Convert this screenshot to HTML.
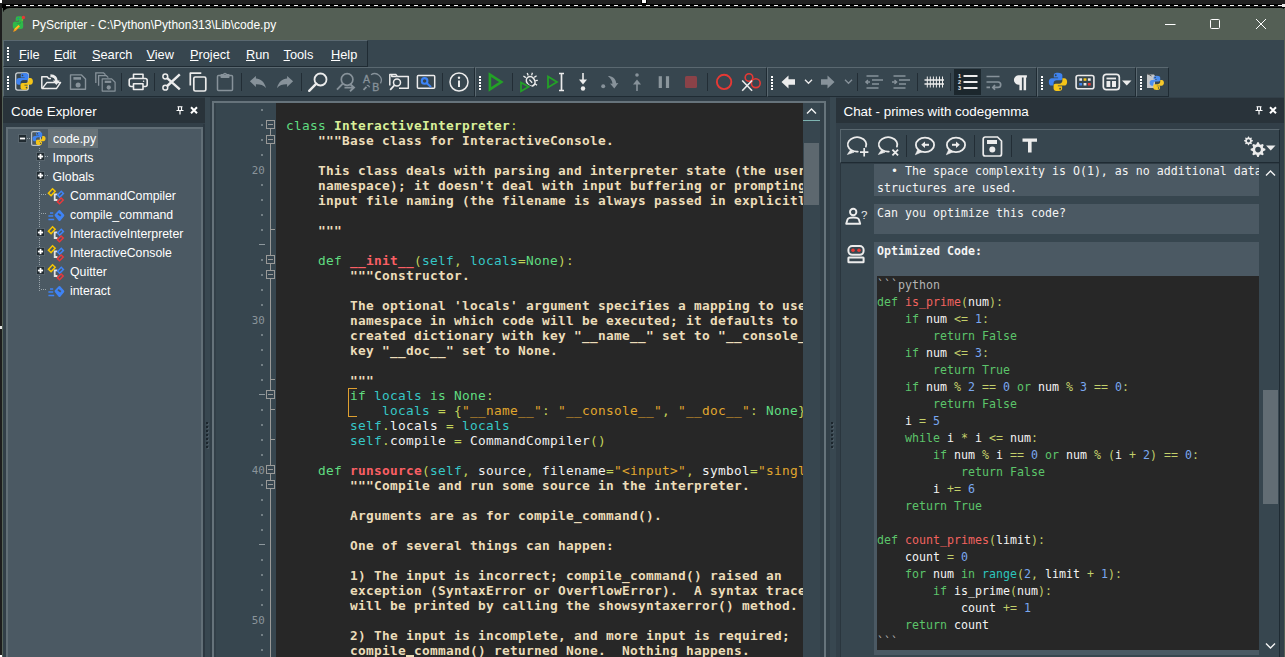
<!DOCTYPE html>
<html lang="en"><head><meta charset="utf-8"><title>PyScripter - C:\Python\Python313\Lib\code.py</title>
<style>
html,body{margin:0;padding:0}
body{width:1285px;height:657px;overflow:hidden;position:relative;background:#37464f;font-family:"Liberation Sans",sans-serif;color:#fff}
.a{position:absolute}
svg{position:absolute;overflow:visible}
.tb{position:absolute;box-sizing:border-box;border-top:1px solid #5a6870;border-left:1px solid #5a6870;border-right:1px solid #1f2b33;border-bottom:1px solid #1f2b33}
.grip{position:absolute;width:2px;height:14px;background:repeating-linear-gradient(180deg,#fff 0 2px,transparent 2px 3px)}
.sep{position:absolute;width:1px;height:18px;background:#222d35}
.menu{position:absolute;top:46.7px;font-size:12.75px;line-height:16px;color:#fff;white-space:pre}
.menu u{text-decoration:underline;text-underline-offset:1.200px;text-decoration-thickness:1px}
.hdr{position:absolute;font-size:13.400px;line-height:16px;color:#fff;white-space:pre}
.tree{position:absolute;font-size:12.300px;line-height:19px;height:19px;margin-top:1px;color:#fff;white-space:pre}
.code{position:absolute;font-family:"DejaVu Sans Mono","Liberation Mono",monospace;font-size:12.8px;line-height:15px;height:15px;white-space:pre;color:#f2f2f2;letter-spacing:0.294px}
.gn{position:absolute;font-family:"DejaVu Sans Mono","Liberation Mono",monospace;font-size:10.8px;line-height:15px;height:15px;white-space:pre;color:#8a949a;text-align:right;width:40px;left:224.7px}
.code b{font-weight:bold}
.k{color:#60dc80}.c{color:#d9f09a;font-weight:bold}.d{color:#ecddba;font-weight:bold}.f{color:#fa5f64;font-weight:bold}.s{color:#36c6c6}.p{color:#c3d45a}.q{color:#e0a62e}.w{color:#f2f2f2}
.chat{position:absolute;font-family:"DejaVu Sans Mono","Liberation Mono",monospace;font-size:11.6px;line-height:17px;height:17px;white-space:pre;color:#f4f4f4;left:877px;letter-spacing:0.016px}
.ck{color:#5cc46a}.cf{color:#f2635f}.cn{color:#7aa7f0}.co{color:#c3cf6a}.cb{color:#2cc5bd}.cg{color:#b4b4b4}
</style></head><body>
<div class="a" style="left:0px;top:0px;width:1285px;height:8px;background:#1f1f1f;"></div>
<div class="a" style="left:0px;top:4px;width:1285px;height:4px;background:#000;"></div>
<div class="a" style="left:2px;top:4px;width:12px;height:12px;background:#000;"></div>
<div class="a" style="left:1276px;top:4px;width:9px;height:9px;background:#000;"></div>
<div class="a" style="left:6px;top:5px;width:1279px;height:1px;background:repeating-linear-gradient(90deg,#f4f4f4 0 4px,transparent 4px 8px);box-shadow:0 0.5px 0 rgba(255,255,255,.25)"></div>
<div class="a" style="left:0px;top:0px;width:2px;height:657px;background:#1d1d1d;"></div>
<div class="a" style="left:2px;top:8px;width:1px;height:649px;background:#566359;"></div>
<div class="a" style="left:1284px;top:8px;width:1px;height:649px;background:#545f55;"></div>
<div class="a" style="left:0px;top:0px;width:2px;height:3px;background:#fff;"></div>
<div class="a" style="left:642px;top:0px;width:4px;height:3px;background:#fff;outline:1px solid #000"></div>
<div class="a" style="left:1282px;top:4px;width:3px;height:3px;background:#e8e8e8;"></div>
<div class="a" style="left:0px;top:326px;width:2px;height:3px;background:#e8e8e8;"></div>
<div class="a" style="left:0px;top:655px;width:2px;height:2px;background:#fff;"></div>
<div class="a" style="left:2px;top:7.600px;width:1283px;height:32.400px;background:#545f55;border-top-left-radius:8px;border-top-right-radius:4px"></div>
<svg style="left:12px;top:15px" width="15" height="18" viewBox="0 0 15 18"><rect x="3.700" y="1.200" width="7.500" height="6.800" rx="2.300" fill="#2fb84a"/><rect x=".8" y="6.400" width="10.400" height="7.500" rx="2.500" fill="#2fb84a"/><path d="M3.700 6.400h3v-1.200" stroke="#545f55" stroke-width=".8" fill="none"/><path d="M8.300 6.900v1.500h-3.500" stroke="#259a3d" stroke-width=".7" fill="none"/><circle cx="11.400" cy="2.500" r="1.700" fill="#e53935"/><path d="M10.900 4.300L10.300 6L9.500 5Z" fill="#f39c12"/><circle cx="6.300" cy="3.600" r=".75" fill="#1f86a8"/><path d="M1.200 17L2.100 13.900L6.300 9.900L8.100 11.500L3.900 15.700Z" fill="#f59b1a"/><path d="M2.900 13.800L6.600 10.300L7.300 10.900L3.500 14.500Z" fill="#ffd028"/></svg>
<div class="a" style="left:32px;top:16.8px;font-size:12px;line-height:16px;white-space:pre;color:#fff">PyScripter - C:\Python\Python313\Lib\code.py</div>
<svg style="left:1160px;top:14px" width="120" height="20" viewBox="0 0 120 20"><g stroke="#fff" stroke-width="1" fill="none"><path d="M5 10.5h10.5"/><rect x="50.5" y="5.5" width="9" height="9" rx="1"/><path d="M96 5l10 10M106 5l-10 10"/></g></svg>
<div class="tb" style="left:3px;top:40px;width:365px;height:27px;border-left-color:#5a6870"></div>
<div class="grip" style="left:7px;top:47px"></div>
<div class="menu" style="left:19px"><u>F</u>ile</div>
<div class="menu" style="left:54px"><u>E</u>dit</div>
<div class="menu" style="left:92px"><u>S</u>earch</div>
<div class="menu" style="left:146.5px"><u>V</u>iew</div>
<div class="menu" style="left:190px"><u>P</u>roject</div>
<div class="menu" style="left:246px"><u>R</u>un</div>
<div class="menu" style="left:283.5px"><u>T</u>ools</div>
<div class="menu" style="left:331px"><u>H</u>elp</div>
<div class="tb" style="left:3px;top:67px;width:472px;height:30px"></div>
<div class="tb" style="left:475px;top:67px;width:292px;height:30px"></div>
<div class="tb" style="left:767px;top:67px;width:270px;height:30px"></div>
<div class="tb" style="left:1037px;top:67px;width:99px;height:30px"></div>
<div class="tb" style="left:1136px;top:67px;width:33px;height:30px"></div>
<div class="grip" style="left:7px;top:76px"></div>
<div class="grip" style="left:479px;top:76px"></div>
<div class="grip" style="left:771px;top:76px"></div>
<div class="grip" style="left:1041px;top:76px"></div>
<div class="grip" style="left:1140px;top:76px"></div>
<div class="sep" style="left:121px;top:73px"></div>
<div class="sep" style="left:154px;top:73px"></div>
<div class="sep" style="left:241px;top:73px"></div>
<div class="sep" style="left:301px;top:73px"></div>
<div class="sep" style="left:442px;top:73px"></div>
<div class="sep" style="left:512px;top:73px"></div>
<div class="sep" style="left:707px;top:73px"></div>
<div class="sep" style="left:857px;top:73px"></div>
<div class="sep" style="left:917px;top:73px"></div>
<div class="sep" style="left:950px;top:73px"></div>
<div class="a" style="left:954px;top:69px;width:27px;height:26px;background:#1c272d;"></div>
<svg style="left:14.0px;top:72px" width="20" height="20" viewBox="0 0 20 20"><rect x="1.700" y=".9" width="12.600" height="17.200" rx="2" fill="none" stroke="#cfd3d6" stroke-width="1.300"/><g transform="translate(1.64 0.54) scale(1.113)"><path d="M7.9.5C5 .5 4.6 1.7 4.6 2.6V4.4H8.1V5H3C1.5 5 .5 6.2.5 8S1.3 11 2.8 11H4.4V9C4.4 7.6 5.5 6.6 6.8 6.6H10C11 6.6 11.6 5.9 11.6 4.9V2.6C11.6 1.3 10.5.5 7.9.5Z" fill="#3f83f0"/><circle cx="6.2" cy="2.5" r=".75" fill="#36454f"/><g transform="rotate(180 8 8)"><path d="M7.9.5C5 .5 4.6 1.7 4.6 2.6V4.4H8.1V5H3C1.5 5 .5 6.2.5 8S1.3 11 2.8 11H4.4V9C4.4 7.6 5.5 6.6 6.8 6.6H10C11 6.6 11.6 5.9 11.6 4.9V2.6C11.6 1.3 10.5.5 7.9.5Z" fill="#f5c518"/><circle cx="6.2" cy="2.5" r=".75" fill="#36454f"/></g></g></svg>
<svg style="left:41.0px;top:72px" width="20" height="20" viewBox="0 0 20 20"><g fill="none" stroke="#ececec" stroke-width="1.500" stroke-linejoin="round"><path d="M.8 16.200V4.800h5.300l1.600 1.800h2.300"/><path d="M1 16.600L5.800 10.600H19.500L15.400 16.600z"/></g><path d="M9.400 3.600C13.200 3.800 15.400 6 15.500 9.400" fill="none" stroke="#ececec" stroke-width="2.600"/><path d="M11.800 8.600h7l-3.400 4.400z" fill="#ececec"/></svg>
<svg style="left:68.0px;top:72px" width="20" height="20" viewBox="0 0 20 20"><g transform="translate(1.8 2.2) scale(1.0)"><path d="M.7 .7h11l4 4v10.300h-15z" fill="none" stroke="#87929a" stroke-width="1.400" stroke-linejoin="round"/><rect x="3.600" y="2.900" width="7.600" height="2.600" fill="#87929a"/><circle cx="8.300" cy="10.800" r="2.500" fill="#87929a"/></g></svg>
<svg style="left:95.0px;top:72px" width="20" height="20" viewBox="0 0 20 20"><g fill="none" stroke="#87929a" stroke-width="1.3"><path d="M.8 11V.8h7.700l2 2"/><path d="M3.600 13.800V3.600h7.700l2 2"/></g><g transform="translate(6.6 6.2) scale(0.86)"><path d="M.7 .7h11l4 4v10.300h-15z" fill="none" stroke="#87929a" stroke-width="1.400" stroke-linejoin="round"/><rect x="3.600" y="2.900" width="7.600" height="2.600" fill="#87929a"/><circle cx="8.300" cy="10.800" r="2.500" fill="#87929a"/></g></svg>
<svg style="left:128.0px;top:72px" width="20" height="20" viewBox="0 0 20 20"><g fill="none" stroke="#ececec" stroke-width="1.600" stroke-linejoin="round"><path d="M5.500 6.500V2.300h9.500V6.500"/><rect x="1.200" y="6.500" width="18" height="8" rx="2"/><rect x="5.500" y="11.700" width="9.500" height="5.800" fill="#37464f"/></g><circle cx="15.600" cy="9.300" r=".8" fill="#ececec"/></svg>
<svg style="left:161.0px;top:72px" width="20" height="20" viewBox="0 0 20 20"><g fill="none" stroke="#ececec"><circle cx="4.300" cy="4.500" r="2.400" stroke-width="1.500"/><circle cx="4.300" cy="15.700" r="2.400" stroke-width="1.500"/><path d="M6.200 6.200L18.800 17.400M6.200 14L18.800 2.400" stroke-width="2.400"/></g></svg>
<svg style="left:188.0px;top:72px" width="20" height="20" viewBox="0 0 20 20"><g fill="none" stroke="#ececec" stroke-width="1.700" stroke-linejoin="round"><path d="M2.300 13.500V1.200h11"/><rect x="5.800" y="5" width="12" height="14" rx="1.500"/></g></svg>
<svg style="left:215.0px;top:72px" width="20" height="20" viewBox="0 0 20 20"><g fill="none" stroke="#87929a" stroke-width="1.500" stroke-linejoin="round"><rect x="2.500" y="3.500" width="15" height="15" rx="1"/></g><path d="M6.200 5.200V2.600h2.300a1.600 1.600 0 0 1 3 0h2.300v2.600z" fill="none" stroke="#87929a" stroke-width="1.400" stroke-linejoin="round"/><path d="M6.200 4.300h7.600" stroke="#87929a" stroke-width="1.800"/></svg>
<svg style="left:248.0px;top:72px" width="20" height="20" viewBox="0 0 20 20"><path d="M1.900 9.300L7.900 3.900V6.600C12.500 6.800 16.500 10 18 15.900C15.500 13 12 12.200 7.900 12.300V15.100Z" fill="#87929a"/></svg>
<svg style="left:275.0px;top:72px" width="20" height="20" viewBox="0 0 20 20"><g transform="translate(20 0) scale(-1 1)"><path d="M1.900 9.300L7.900 3.900V6.600C12.500 6.800 16.500 10 18 15.900C15.500 13 12 12.200 7.900 12.300V15.100Z" fill="#87929a"/></g></svg>
<svg style="left:308.0px;top:72px" width="20" height="20" viewBox="0 0 20 20"><g fill="none" stroke="#ececec"><circle cx="12.500" cy="7.500" r="6" stroke-width="1.800"/><path d="M8.300 11.700L1.200 18.800" stroke-width="2.400" stroke-linecap="round"/></g></svg>
<svg style="left:335.0px;top:72px" width="20" height="20" viewBox="0 0 20 20"><g fill="none" stroke="#87929a"><circle cx="12.100" cy="7.500" r="5.800" stroke-width="1.700"/><path d="M7.800 11.600L2 17.600" stroke-width="1.900"/><path d="M9.500 15.600h9.500M15 12l4 3.600l-4 3.600" stroke-width="1.900"/></g></svg>
<svg style="left:362.0px;top:72px" width="20" height="20" viewBox="0 0 20 20"><g fill="none" stroke="#87929a" stroke-width="1.300"><path d="M9 2.800a6.600 6.600 0 0 1 9.500 8.600"/><path d="M1.500 17.800l3-3" stroke-width="1.800"/><path d="M4.800 13.400c1.500 0 2.300.6 2.800 1.800"/></g><text x="1" y="10.800" font-family="Liberation Sans,sans-serif" font-size="10.500" fill="#87929a" stroke="#87929a" stroke-width=".3">A</text><text x="10.300" y="18.500" font-family="Liberation Sans,sans-serif" font-size="10.500" fill="#87929a" stroke="#87929a" stroke-width=".3">B</text></svg>
<svg style="left:389.0px;top:72px" width="20" height="20" viewBox="0 0 20 20"><g fill="none" stroke="#ececec" stroke-width="1.500" stroke-linejoin="round"><path d="M.8 13.500V2.400h6l1.500 2.100H19.300v11.700H10"/><path d="M2.800 2.400v2.100h5"/><circle cx="8" cy="10.600" r="3.500" fill="#37464f"/><path d="M5.500 13.200L1.200 17.800" stroke-width="1.700"/></g></svg>
<svg style="left:416.0px;top:72px" width="20" height="20" viewBox="0 0 20 20"><rect x="1.400" y="3.500" width="17.300" height="12.800" rx="1" fill="none" stroke="#ececec" stroke-width="1.500"/><g fill="none" stroke="#3d84f5" stroke-width="2.100"><circle cx="8.600" cy="8.900" r="2.800"/><path d="M10.800 11.200l3.700 3.300" stroke-linecap="round"/></g></svg>
<svg style="left:449.0px;top:72px" width="20" height="20" viewBox="0 0 20 20"><circle cx="10" cy="10" r="9" fill="none" stroke="#ececec" stroke-width="1.500"/><rect x="9" y="8.500" width="2" height="6.500" fill="#ececec"/><circle cx="10" cy="5.700" r="1.200" fill="#ececec"/></svg>
<svg style="left:485.5px;top:72px" width="20" height="20" viewBox="0 0 20 20"><path d="M3.900 2.600L15.300 10L3.900 17.400z" fill="none" stroke="#23a127" stroke-width="2.600" stroke-linejoin="miter"/></svg>
<svg style="left:519.0px;top:72px" width="20" height="20" viewBox="0 0 20 20"><g fill="none" stroke="#ececec" stroke-width="1.300"><ellipse cx="11.700" cy="9.300" rx="4" ry="5" transform="rotate(-32 11.700 9.300)" stroke-width="1.600"/><path d="M6.800 5.600L4.400 4M9.200 3.600L8.200 1M12.600 3.400L13.400 .8M15.200 5.400L17.600 3.800M16.400 8.600L18.800 8.400M16 11.800l2 1.400M10.400 7.600l2.800 3.200"/></g><path d="M2 10.400l7.600 4.400L2 19.200z" fill="#37464f" stroke="#37464f" stroke-width="3.400"/><path d="M2 10.400l7.600 4.400L2 19.200z" fill="none" stroke="#23a127" stroke-width="1.700"/></svg>
<svg style="left:546.0px;top:72px" width="20" height="20" viewBox="0 0 20 20"><path d="M2 4.500L11 10L2 15.500z" fill="none" stroke="#23a127" stroke-width="1.800"/><path d="M13 1.500h5M13 18.500h5M15.500 1.500v17" stroke="#ececec" stroke-width="1.700" fill="none"/></svg>
<svg style="left:573.0px;top:72px" width="20" height="20" viewBox="0 0 20 20"><path d="M10 1v10" stroke="#ececec" stroke-width="1.600"/><path d="M6 7.500h8L10 12.500z" fill="#ececec"/><circle cx="10" cy="16.500" r="2.200" fill="#ececec"/></svg>
<svg style="left:600.0px;top:72px" width="20" height="20" viewBox="0 0 20 20"><circle cx="3.200" cy="14.300" r="2" fill="#87929a"/><path d="M7.900 4.100C12.300 4.100 15.600 6.500 16.300 11.300L18.400 11L14.300 16.600L10 11.600L12.500 11.700C12.200 9 10.600 6.200 7.900 4.100Z" fill="#87929a"/></svg>
<svg style="left:627.0px;top:72px" width="20" height="20" viewBox="0 0 20 20"><circle cx="10" cy="3" r="1.800" fill="#87929a"/><path d="M10 19V10" stroke="#87929a" stroke-width="1.600"/><path d="M6 12.500h8L10 7.500z" fill="#87929a"/></svg>
<svg style="left:654.0px;top:72px" width="20" height="20" viewBox="0 0 20 20"><rect x="4.700" y="4.200" width="3.200" height="11.800" fill="#8b969c"/><rect x="11.900" y="4.200" width="3.200" height="11.800" fill="#8b969c"/></svg>
<svg style="left:681.0px;top:72px" width="20" height="20" viewBox="0 0 20 20"><rect x="4" y="4" width="12" height="12" rx="1.500" fill="#8a4248"/></svg>
<svg style="left:714.0px;top:72px" width="20" height="20" viewBox="0 0 20 20"><circle cx="10.100" cy="9.900" r="7.200" fill="none" stroke="#e53935" stroke-width="1.900"/></svg>
<svg style="left:741.0px;top:72px" width="20" height="20" viewBox="0 0 20 20"><g fill="none" stroke="#e53935" stroke-width="1.600"><circle cx="8" cy="5.500" r="3.800"/><circle cx="14.800" cy="11.200" r="4.400"/></g><path d="M1.200 8.500l9.900 10.200M11.100 8.500L1.200 18.700" stroke="#ececec" stroke-width="1.600"/></svg>
<svg style="left:778.0px;top:72px" width="20" height="20" viewBox="0 0 20 20"><path d="M1 10L8 3.500v3.800h6.500v5.400H8v3.800z" fill="#ececec" transform="translate(2.500 0)"/></svg>
<svg style="left:804px;top:78px" width="9" height="8" viewBox="0 0 9 8"><path d="M1 1.800L4.500 5.300L8 1.800" fill="none" stroke="#ececec" stroke-width="1.300"/></svg>
<svg style="left:818.0px;top:72px" width="20" height="20" viewBox="0 0 20 20"><g transform="translate(17.500 0) scale(-1 1)"><path d="M1 10L8 3.500v3.800h6.500v5.400H8v3.800z" fill="#87929a"/></g></svg>
<svg style="left:844px;top:78px" width="9" height="8" viewBox="0 0 9 8"><path d="M1 1.800L4.500 5.300L8 1.800" fill="none" stroke="#87929a" stroke-width="1.300"/></svg>
<svg style="left:864.0px;top:72px" width="20" height="20" viewBox="0 0 20 20"><g stroke="#87929a" stroke-width="1.300" fill="none"><path d="M2.500 4h12M8 8h11M2 10h4M4 8l-2.200 2l2.200 2M8 12h7M2.500 16h12"/></g></svg>
<svg style="left:891.0px;top:72px" width="20" height="20" viewBox="0 0 20 20"><g stroke="#87929a" stroke-width="1.300" fill="none"><path d="M2.500 4h12M8 8h11M1 10h4.500M3.500 8l2.200 2l-2.200 2M8 12h7M2.500 16h12"/></g></svg>
<svg style="left:924.0px;top:72px" width="20" height="20" viewBox="0 0 20 20"><g stroke="#ececec" stroke-width="1.400" fill="none"><path d="M.5 8h19.500M.5 12h19.500" stroke-width="1.700"/><path d="M3.300 4.500v11M6.300 4.500v11M9.400 4.500v11M12.400 4.500v11M15.500 4.500v11M18.500 4.500v11" stroke-width="1"/></g></svg>
<svg style="left:957.5px;top:72px" width="20" height="20" viewBox="0 0 20 20"><g stroke="#ececec" stroke-width="1.800"><path d="M5.500 4h14M5.500 10h14M5.500 16h14"/></g><g fill="#ececec" font-family="Liberation Sans,sans-serif" font-size="5.500" font-weight="bold"><text x="0" y="6">1</text><text x="0" y="12">2</text><text x="0" y="18">3</text></g></svg>
<svg style="left:984.0px;top:72px" width="20" height="20" viewBox="0 0 20 20"><g stroke="#87929a" stroke-width="1.700" fill="none"><path d="M2.500 4.500h13M2.500 10h11.500a2.700 2.700 0 0 1 0 5.400H9M11 13l-2.200 2.400l2.200 2.400M2.500 15.400h3.500"/></g></svg>
<svg style="left:1011.0px;top:72px" width="20" height="20" viewBox="0 0 20 20"><path d="M17.500 3H9.200a4.700 4.700 0 0 0 0 9.400h.8V18h2.500V5.200h1.700V18h2.500V5.200h.8z" fill="#ececec" transform="translate(-1.600 .3)"/></svg>
<svg style="left:1048.0px;top:72px" width="20" height="20" viewBox="0 0 20 20"><g transform="translate(0.2 0.2) scale(1.22)"><path d="M7.9.5C5 .5 4.6 1.7 4.6 2.6V4.4H8.1V5H3C1.5 5 .5 6.2.5 8S1.3 11 2.8 11H4.4V9C4.4 7.6 5.5 6.6 6.8 6.6H10C11 6.6 11.6 5.9 11.6 4.9V2.6C11.6 1.3 10.5.5 7.9.5Z" fill="#3f83f0"/><circle cx="6.2" cy="2.5" r=".75" fill="#36454f"/><g transform="rotate(180 8 8)"><path d="M7.9.5C5 .5 4.6 1.7 4.6 2.6V4.4H8.1V5H3C1.5 5 .5 6.2.5 8S1.3 11 2.8 11H4.4V9C4.4 7.6 5.5 6.6 6.8 6.6H10C11 6.6 11.6 5.9 11.6 4.9V2.6C11.6 1.3 10.5.5 7.9.5Z" fill="#f5c518"/><circle cx="6.2" cy="2.5" r=".75" fill="#36454f"/></g></g></svg>
<svg style="left:1075.0px;top:72px" width="20" height="20" viewBox="0 0 20 20"><rect x="1.100" y="3.500" width="17.800" height="13.200" rx="2" fill="none" stroke="#ececec" stroke-width="1.600"/><rect x="4.300" y="6.300" width="2.800" height="2.500" fill="#e8e8e8"/><rect x="8.600" y="6.300" width="2.800" height="2.500" fill="#f5c518"/><rect x="12.900" y="6.300" width="2.800" height="2.500" fill="#e8e8e8"/><rect x="4.300" y="11" width="2.800" height="2.500" fill="#3f83f0"/><rect x="8.600" y="11" width="2.800" height="2.500" fill="#e8e8e8"/><rect x="12.900" y="11" width="2.800" height="2.500" fill="#e53935"/></svg>
<svg style="left:1102.0px;top:72px" width="20" height="20" viewBox="0 0 20 20"><rect x="1.300" y="2.300" width="16" height="15.400" rx="3" fill="none" stroke="#ececec" stroke-width="1.700"/><path d="M4.500 6.500h9.500" stroke="#ececec" stroke-width="1.800"/><rect x="4.500" y="9" width="3.800" height="6" fill="#ececec"/><rect x="10" y="9" width="4" height="6" fill="#ececec"/></svg>
<svg style="left:1122px;top:80px" width="10" height="6" viewBox="0 0 10 6"><path d="M0 .5h9.500L4.750 5.500z" fill="#ececec"/></svg>
<svg style="left:1145.0px;top:72px" width="20" height="20" viewBox="0 0 20 20"><path d="M2 2.500h7l1 1.500v12H2z" fill="#dcdcdc" opacity=".85"/><path d="M2.500 1.500l4 2.500" stroke="#555" stroke-width="1"/><g transform="translate(4.2 3.2) scale(0.95)"><path d="M7.9.5C5 .5 4.6 1.7 4.6 2.6V4.4H8.1V5H3C1.5 5 .5 6.2.5 8S1.3 11 2.8 11H4.4V9C4.4 7.6 5.5 6.6 6.8 6.6H10C11 6.6 11.6 5.9 11.6 4.9V2.6C11.6 1.3 10.5.5 7.9.5Z" fill="#4a8df0"/><circle cx="6.2" cy="2.5" r=".75" fill="#36454f"/><g transform="rotate(180 8 8)"><path d="M7.9.5C5 .5 4.6 1.7 4.6 2.6V4.4H8.1V5H3C1.5 5 .5 6.2.5 8S1.3 11 2.8 11H4.4V9C4.4 7.6 5.5 6.6 6.8 6.6H10C11 6.6 11.6 5.9 11.6 4.9V2.6C11.6 1.3 10.5.5 7.9.5Z" fill="#f7c92a"/><circle cx="6.2" cy="2.5" r=".75" fill="#36454f"/></g></g></svg>
<div class="a" style="left:3px;top:97px;width:1281px;height:560px;background:#323f48;"></div>
<div class="a" style="left:205px;top:97px;width:5px;height:560px;background:#384750;"></div>
<div class="a" style="left:830px;top:97px;width:6px;height:560px;background:#384750;"></div>
<div class="a" style="left:3px;top:98px;width:202px;height:25.3px;background:#29333a;"></div>
<div class="hdr" style="left:11px;top:103.8px">Code Explorer</div>
<svg style="left:176px;top:106px" width="24" height="10" viewBox="0 0 24 10"><g stroke="#fff" fill="none"><path d="M1.5 .75h5M2.5 .75v3.5M5.5 .75v3.5M.5 4.5h7M4 4.5v4" stroke-width="1.2"/><path d="M15 1.2l6 6M21 1.2l-6 6" stroke-width="2"/></g></svg>
<div class="a" style="left:6px;top:127px;width:197.2px;height:531px;background:#626f77;"></div>
<div class="a" style="left:7.8px;top:128.7px;width:193.6px;height:529px;background:#4b5963;"></div>
<div class="a" style="left:203.2px;top:124px;width:1.8px;height:540px;background:#2c3841;"></div>
<div class="a" style="left:48px;top:129px;width:50px;height:19px;background:#677278"></div>
<div class="a" style="left:39px;top:148px;width:1px;height:143px;background:repeating-linear-gradient(180deg,#9aa5ab 0 1px,transparent 1px 2px)"></div>
<div class="a" style="left:27px;top:138px;width:4px;height:1px;background:repeating-linear-gradient(90deg,#9aa5ab 0 1px,transparent 1px 2px)"></div>
<svg style="left:18px;top:134px" width="9" height="9" viewBox="0 0 9 9"><rect width="9" height="9" fill="#57646d"/><rect x="1" y="1" width="7" height="7" fill="#212b31"/><rect x="1.900" y="3.600" width="5.200" height="1.800" fill="#fff"/></svg>
<svg style="left:31px;top:131px" width="15" height="15" viewBox="0 0 15 15"><rect x=".6" y=".6" width="8.800" height="13.800" rx="1.500" fill="none" stroke="#b9bfc3" stroke-width="1.200"/><g transform="translate(1.1 0.6) scale(0.87)"><path d="M7.9.5C5 .5 4.6 1.7 4.6 2.6V4.4H8.1V5H3C1.5 5 .5 6.2.5 8S1.3 11 2.8 11H4.4V9C4.4 7.6 5.5 6.6 6.8 6.6H10C11 6.6 11.6 5.9 11.6 4.9V2.6C11.6 1.3 10.5.5 7.9.5Z" fill="#3f83f0"/><circle cx="6.2" cy="2.5" r=".75" fill="#36454f"/><g transform="rotate(180 8 8)"><path d="M7.9.5C5 .5 4.6 1.7 4.6 2.6V4.4H8.1V5H3C1.5 5 .5 6.2.5 8S1.3 11 2.8 11H4.4V9C4.4 7.6 5.5 6.6 6.8 6.6H10C11 6.6 11.6 5.9 11.6 4.9V2.6C11.6 1.3 10.5.5 7.9.5Z" fill="#f5c518"/><circle cx="6.2" cy="2.5" r=".75" fill="#36454f"/></g></g></svg>
<div class="tree" style="left:53px;top:129px">code.py</div>
<svg style="left:36px;top:152px" width="9" height="9" viewBox="0 0 9 9"><rect width="9" height="9" fill="#57646d"/><rect x="1" y="1" width="7" height="7" fill="#212b31"/><rect x="1.900" y="3.600" width="5.200" height="1.800" fill="#fff"/><rect x="3.600" y="1.900" width="1.800" height="5.200" fill="#fff"/></svg>
<div class="a" style="left:45px;top:156.0px;width:4px;height:1px;background:repeating-linear-gradient(90deg,#9aa5ab 0 1px,transparent 1px 2px)"></div>
<div class="tree" style="left:52.5px;top:148px">Imports</div>
<svg style="left:36px;top:171px" width="9" height="9" viewBox="0 0 9 9"><rect width="9" height="9" fill="#57646d"/><rect x="1" y="1" width="7" height="7" fill="#212b31"/><rect x="1.900" y="3.600" width="5.200" height="1.800" fill="#fff"/><rect x="3.600" y="1.900" width="1.800" height="5.200" fill="#fff"/></svg>
<div class="a" style="left:45px;top:175.0px;width:4px;height:1px;background:repeating-linear-gradient(90deg,#9aa5ab 0 1px,transparent 1px 2px)"></div>
<div class="tree" style="left:52.5px;top:167px">Globals</div>
<div class="a" style="left:41px;top:194.0px;width:6px;height:1px;background:repeating-linear-gradient(90deg,#9aa5ab 0 1px,transparent 1px 2px)"></div>
<svg style="left:48px;top:187.5px" width="17" height="17" viewBox="0 0 17 17"><path d="M9.400 6.400H6.700v5.600h2.700" fill="none" stroke="#e2e2e2" stroke-width="1.800"/><rect x=".8" y="2.400" width="6" height="3.600" fill="none" stroke="#f5c400" stroke-width="1.500" transform="rotate(-47 3.800 4.200)"/><rect x="9.900" y="4.700" width="5.200" height="3" fill="none" stroke="#3f83f5" stroke-width="1.500" transform="rotate(-45 12.500 6.200)"/><rect x="9.700" y="11.400" width="5.200" height="3" fill="none" stroke="#e8393c" stroke-width="1.500" transform="rotate(-45 12.300 12.900)"/></svg>
<div class="tree" style="left:70px;top:186px">CommandCompiler</div>
<div class="a" style="left:41px;top:213.0px;width:6px;height:1px;background:repeating-linear-gradient(90deg,#9aa5ab 0 1px,transparent 1px 2px)"></div>
<svg style="left:48px;top:206.5px" width="17" height="17" viewBox="0 0 17 17"><path d="M2 5.900h3.200M.4 9h4.800M.4 12.400h5.800" stroke="#3f83f5" stroke-width="1.500"/><path d="M11.400 4.300L15 8.400L11.500 12.700L7.900 8.200z" fill="#3f83f5" stroke="#3f83f5" stroke-width="2.600" stroke-linejoin="round"/><rect x="9.700" y="6.900" width="3.400" height="1.800" fill="#4b5963" transform="rotate(35 11.400 7.800)"/></svg>
<div class="tree" style="left:70px;top:205px">compile_command</div>
<svg style="left:36px;top:228px" width="9" height="9" viewBox="0 0 9 9"><rect width="9" height="9" fill="#57646d"/><rect x="1" y="1" width="7" height="7" fill="#212b31"/><rect x="1.900" y="3.600" width="5.200" height="1.800" fill="#fff"/><rect x="3.600" y="1.900" width="1.800" height="5.200" fill="#fff"/></svg>
<svg style="left:48px;top:225.5px" width="17" height="17" viewBox="0 0 17 17"><path d="M9.400 6.400H6.700v5.600h2.700" fill="none" stroke="#e2e2e2" stroke-width="1.800"/><rect x=".8" y="2.400" width="6" height="3.600" fill="none" stroke="#f5c400" stroke-width="1.500" transform="rotate(-47 3.800 4.200)"/><rect x="9.900" y="4.700" width="5.200" height="3" fill="none" stroke="#3f83f5" stroke-width="1.500" transform="rotate(-45 12.500 6.200)"/><rect x="9.700" y="11.400" width="5.200" height="3" fill="none" stroke="#e8393c" stroke-width="1.500" transform="rotate(-45 12.300 12.900)"/></svg>
<div class="tree" style="left:70px;top:224px">InteractiveInterpreter</div>
<svg style="left:36px;top:247px" width="9" height="9" viewBox="0 0 9 9"><rect width="9" height="9" fill="#57646d"/><rect x="1" y="1" width="7" height="7" fill="#212b31"/><rect x="1.900" y="3.600" width="5.200" height="1.800" fill="#fff"/><rect x="3.600" y="1.900" width="1.800" height="5.200" fill="#fff"/></svg>
<svg style="left:48px;top:244.5px" width="17" height="17" viewBox="0 0 17 17"><path d="M9.400 6.400H6.700v5.600h2.700" fill="none" stroke="#e2e2e2" stroke-width="1.800"/><rect x=".8" y="2.400" width="6" height="3.600" fill="none" stroke="#f5c400" stroke-width="1.500" transform="rotate(-47 3.800 4.200)"/><rect x="9.900" y="4.700" width="5.200" height="3" fill="none" stroke="#3f83f5" stroke-width="1.500" transform="rotate(-45 12.500 6.200)"/><rect x="9.700" y="11.400" width="5.200" height="3" fill="none" stroke="#e8393c" stroke-width="1.500" transform="rotate(-45 12.300 12.900)"/></svg>
<div class="tree" style="left:70px;top:243px">InteractiveConsole</div>
<svg style="left:36px;top:266px" width="9" height="9" viewBox="0 0 9 9"><rect width="9" height="9" fill="#57646d"/><rect x="1" y="1" width="7" height="7" fill="#212b31"/><rect x="1.900" y="3.600" width="5.200" height="1.800" fill="#fff"/><rect x="3.600" y="1.900" width="1.800" height="5.200" fill="#fff"/></svg>
<svg style="left:48px;top:263.5px" width="17" height="17" viewBox="0 0 17 17"><path d="M9.400 6.400H6.700v5.600h2.700" fill="none" stroke="#e2e2e2" stroke-width="1.800"/><rect x=".8" y="2.400" width="6" height="3.600" fill="none" stroke="#f5c400" stroke-width="1.500" transform="rotate(-47 3.800 4.200)"/><rect x="9.900" y="4.700" width="5.200" height="3" fill="none" stroke="#3f83f5" stroke-width="1.500" transform="rotate(-45 12.500 6.200)"/><rect x="9.700" y="11.400" width="5.200" height="3" fill="none" stroke="#e8393c" stroke-width="1.500" transform="rotate(-45 12.300 12.900)"/></svg>
<div class="tree" style="left:70px;top:262px">Quitter</div>
<div class="a" style="left:41px;top:289.0px;width:6px;height:1px;background:repeating-linear-gradient(90deg,#9aa5ab 0 1px,transparent 1px 2px)"></div>
<svg style="left:48px;top:282.5px" width="17" height="17" viewBox="0 0 17 17"><path d="M2 5.900h3.200M.4 9h4.800M.4 12.400h5.800" stroke="#3f83f5" stroke-width="1.500"/><path d="M11.400 4.300L15 8.400L11.500 12.700L7.900 8.200z" fill="#3f83f5" stroke="#3f83f5" stroke-width="2.600" stroke-linejoin="round"/><rect x="9.700" y="6.900" width="3.400" height="1.800" fill="#4b5963" transform="rotate(35 11.400 7.800)"/></svg>
<div class="tree" style="left:70px;top:281px">interact</div>
<div class="a" style="left:206.800px;top:422.800px;width:2px;height:26px;background:repeating-linear-gradient(180deg,#4a5862 0 2px,transparent 2px 4px)"></div>
<div class="a" style="left:206px;top:422px;width:2px;height:26px;background:repeating-linear-gradient(180deg,#1c262d 0 2px,transparent 2px 4px)"></div>
<div class="a" style="left:832px;top:423px;width:2px;height:26px;background:repeating-linear-gradient(180deg,#4a5862 0 2px,transparent 2px 4px)"></div>
<div class="a" style="left:831.200px;top:422.200px;width:2px;height:26px;background:repeating-linear-gradient(180deg,#1c262d 0 2px,transparent 2px 4px)"></div>
<div class="a" style="left:212px;top:101px;width:614px;height:560px;background:#66737b;"></div>
<div class="a" style="left:214px;top:103px;width:610px;height:560px;background:#323f48;"></div>
<div class="a" style="left:216px;top:103px;width:60px;height:560px;background:#37464f;"></div>
<div class="a" style="left:276px;top:103px;width:527px;height:560px;background:#272727;"></div>
<div class="a" style="left:276px;top:103px;width:527px;height:554px;overflow:hidden">
<div class="code" style="left:10px;top:15px"><span class="k">class</span> <span class="c">InteractiveInterpreter</span><span class="p">:</span></div>
<div class="code" style="left:10px;top:30px"><span class="d">    """Base class for InteractiveConsole.</span></div>
<div class="code" style="left:10px;top:60px"><span class="d">    This class deals with parsing and interpreter state (the user's</span></div>
<div class="code" style="left:10px;top:75px"><span class="d">    namespace); it doesn't deal with input buffering or prompting or</span></div>
<div class="code" style="left:10px;top:90px"><span class="d">    input file naming (the filename is always passed in explicitly).</span></div>
<div class="code" style="left:10px;top:120px"><span class="d">    """</span></div>
<div class="code" style="left:10px;top:150px">    <span class="k">def</span> <span class="f">__init__</span><span class="p">(</span><span class="s">self</span><span class="p">,</span> <span class="s">locals</span><span class="p">=</span><span class="k">None</span><span class="p">):</span></div>
<div class="code" style="left:10px;top:165px"><span class="d">        """Constructor.</span></div>
<div class="code" style="left:10px;top:195px"><span class="d">        The optional 'locals' argument specifies a mapping to use as the</span></div>
<div class="code" style="left:10px;top:210px"><span class="d">        namespace in which code will be executed; it defaults to a newly</span></div>
<div class="code" style="left:10px;top:225px"><span class="d">        created dictionary with key "__name__" set to "__console__" and</span></div>
<div class="code" style="left:10px;top:240px"><span class="d">        key "__doc__" set to None.</span></div>
<div class="code" style="left:10px;top:270px"><span class="d">        """</span></div>
<div class="code" style="left:10px;top:285px">        <span class="k">if</span> <span class="s">locals</span> <span class="k">is</span> <span class="k">None</span><span class="p">:</span></div>
<div class="code" style="left:10px;top:300px">            <span class="s">locals</span> <span class="p">=</span> <span class="p">{</span><span class="q">"__name__"</span><span class="p">:</span> <span class="q">"__console__"</span><span class="p">,</span> <span class="q">"__doc__"</span><span class="p">:</span> <span class="k">None</span><span class="p">}</span></div>
<div class="code" style="left:10px;top:315px">        <span class="s">self</span><span class="p">.</span><span class="w">locals</span> <span class="p">=</span> <span class="s">locals</span></div>
<div class="code" style="left:10px;top:330px">        <span class="s">self</span><span class="p">.</span><span class="w">compile</span> <span class="p">=</span> <span class="w">CommandCompiler</span><span class="p">()</span></div>
<div class="code" style="left:10px;top:360px">    <span class="k">def</span> <span class="f">runsource</span><span class="p">(</span><span class="s">self</span><span class="p">,</span> <span class="w">source</span><span class="p">,</span> <span class="w">filename</span><span class="p">=</span><span class="q">"&lt;input&gt;"</span><span class="p">,</span> <span class="w">symbol</span><span class="p">=</span><span class="q">"single"</span><span class="p">):</span></div>
<div class="code" style="left:10px;top:375px"><span class="d">        """Compile and run some source in the interpreter.</span></div>
<div class="code" style="left:10px;top:405px"><span class="d">        Arguments are as for compile_command().</span></div>
<div class="code" style="left:10px;top:435px"><span class="d">        One of several things can happen:</span></div>
<div class="code" style="left:10px;top:465px"><span class="d">        1) The input is incorrect; compile_command() raised an</span></div>
<div class="code" style="left:10px;top:480px"><span class="d">        exception (SyntaxError or OverflowError).  A syntax traceback</span></div>
<div class="code" style="left:10px;top:495px"><span class="d">        will be printed by calling the showsyntaxerror() method.</span></div>
<div class="code" style="left:10px;top:525px"><span class="d">        2) The input is incomplete, and more input is required;</span></div>
<div class="code" style="left:10px;top:540px"><span class="d">        compile_command() returned None.  Nothing happens.</span></div>
<div class="a" style="left:72.300px;top:284.800px;width:9px;height:29.200px;border:1.400px solid #dfa030;border-right:none;box-sizing:border-box"></div>
<div class="a" style="left:130px;top:551.600px;width:7.600px;height:2.400px;background:#ecddba"></div>
</div>
<div class="a" style="left:261px;top:109px;width:2px;height:2px;background:#8d979d;opacity:.7"></div>
<div class="a" style="left:261px;top:124px;width:2px;height:2px;background:#8d979d;opacity:.7"></div>
<div class="a" style="left:261px;top:139px;width:2px;height:2px;background:#8d979d;opacity:.7"></div>
<div class="a" style="left:261px;top:154px;width:2px;height:2px;background:#8d979d;opacity:.7"></div>
<div class="gn" style="top:163px">20</div>
<div class="a" style="left:261px;top:184px;width:2px;height:2px;background:#8d979d;opacity:.7"></div>
<div class="a" style="left:261px;top:199px;width:2px;height:2px;background:#8d979d;opacity:.7"></div>
<div class="a" style="left:261px;top:214px;width:2px;height:2px;background:#8d979d;opacity:.7"></div>
<div class="a" style="left:261px;top:229px;width:2px;height:2px;background:#8d979d;opacity:.7"></div>
<div class="a" style="left:258.5px;top:244px;width:6.5px;height:1px;background:#8d979d"></div>
<div class="a" style="left:261px;top:259px;width:2px;height:2px;background:#8d979d;opacity:.7"></div>
<div class="a" style="left:261px;top:274px;width:2px;height:2px;background:#8d979d;opacity:.7"></div>
<div class="a" style="left:261px;top:289px;width:2px;height:2px;background:#8d979d;opacity:.7"></div>
<div class="a" style="left:261px;top:304px;width:2px;height:2px;background:#8d979d;opacity:.7"></div>
<div class="gn" style="top:313px">30</div>
<div class="a" style="left:261px;top:334px;width:2px;height:2px;background:#8d979d;opacity:.7"></div>
<div class="a" style="left:261px;top:349px;width:2px;height:2px;background:#8d979d;opacity:.7"></div>
<div class="a" style="left:261px;top:364px;width:2px;height:2px;background:#8d979d;opacity:.7"></div>
<div class="a" style="left:261px;top:379px;width:2px;height:2px;background:#8d979d;opacity:.7"></div>
<div class="a" style="left:258.5px;top:394px;width:6.5px;height:1px;background:#8d979d"></div>
<div class="a" style="left:261px;top:409px;width:2px;height:2px;background:#8d979d;opacity:.7"></div>
<div class="a" style="left:261px;top:424px;width:2px;height:2px;background:#8d979d;opacity:.7"></div>
<div class="a" style="left:261px;top:439px;width:2px;height:2px;background:#8d979d;opacity:.7"></div>
<div class="a" style="left:261px;top:454px;width:2px;height:2px;background:#8d979d;opacity:.7"></div>
<div class="gn" style="top:463px">40</div>
<div class="a" style="left:261px;top:484px;width:2px;height:2px;background:#8d979d;opacity:.7"></div>
<div class="a" style="left:261px;top:499px;width:2px;height:2px;background:#8d979d;opacity:.7"></div>
<div class="a" style="left:261px;top:514px;width:2px;height:2px;background:#8d979d;opacity:.7"></div>
<div class="a" style="left:261px;top:529px;width:2px;height:2px;background:#8d979d;opacity:.7"></div>
<div class="a" style="left:258.5px;top:544px;width:6.5px;height:1px;background:#8d979d"></div>
<div class="a" style="left:261px;top:559px;width:2px;height:2px;background:#8d979d;opacity:.7"></div>
<div class="a" style="left:261px;top:574px;width:2px;height:2px;background:#8d979d;opacity:.7"></div>
<div class="a" style="left:261px;top:589px;width:2px;height:2px;background:#8d979d;opacity:.7"></div>
<div class="a" style="left:261px;top:604px;width:2px;height:2px;background:#8d979d;opacity:.7"></div>
<div class="gn" style="top:613px">50</div>
<div class="a" style="left:261px;top:634px;width:2px;height:2px;background:#8d979d;opacity:.7"></div>
<div class="a" style="left:261px;top:649px;width:2px;height:2px;background:#8d979d;opacity:.7"></div>
<div class="a" style="left:270px;top:124px;width:1px;height:533px;background:#9a9a98"></div>
<div class="a" style="left:270px;top:229px;width:5px;height:1px;background:#9a9a98"></div>
<div class="a" style="left:270px;top:379px;width:5px;height:1px;background:#9a9a98"></div>
<div class="a" style="left:270px;top:409px;width:5px;height:1px;background:#9a9a98"></div>
<div class="a" style="left:270px;top:439px;width:5px;height:1px;background:#9a9a98"></div>
<div class="a" style="left:266px;top:120px;width:9px;height:9px;box-sizing:border-box;border:1px solid #9a9a98;background:#36454f"></div>
<div class="a" style="left:268px;top:124px;width:5px;height:1px;background:#9a9a98"></div>
<div class="a" style="left:266px;top:135px;width:9px;height:9px;box-sizing:border-box;border:1px solid #9a9a98;background:#36454f"></div>
<div class="a" style="left:268px;top:139px;width:5px;height:1px;background:#9a9a98"></div>
<div class="a" style="left:266px;top:255px;width:9px;height:9px;box-sizing:border-box;border:1px solid #9a9a98;background:#36454f"></div>
<div class="a" style="left:268px;top:259px;width:5px;height:1px;background:#9a9a98"></div>
<div class="a" style="left:266px;top:270px;width:9px;height:9px;box-sizing:border-box;border:1px solid #9a9a98;background:#36454f"></div>
<div class="a" style="left:268px;top:274px;width:5px;height:1px;background:#9a9a98"></div>
<div class="a" style="left:266px;top:390px;width:9px;height:9px;box-sizing:border-box;border:1px solid #9a9a98;background:#36454f"></div>
<div class="a" style="left:268px;top:394px;width:5px;height:1px;background:#9a9a98"></div>
<div class="a" style="left:266px;top:465px;width:9px;height:9px;box-sizing:border-box;border:1px solid #9a9a98;background:#36454f"></div>
<div class="a" style="left:268px;top:469px;width:5px;height:1px;background:#9a9a98"></div>
<div class="a" style="left:266px;top:480px;width:9px;height:9px;box-sizing:border-box;border:1px solid #9a9a98;background:#36454f"></div>
<div class="a" style="left:268px;top:484px;width:5px;height:1px;background:#9a9a98"></div>
<div class="a" style="left:803px;top:103px;width:17px;height:560px;background:#37464f;"></div>
<svg style="left:806px;top:107px" width="11" height="8" viewBox="0 0 11 8"><path d="M1 6.5L5.5 2 10 6.5" stroke="#f4f4f4" stroke-width="1.4" fill="none"/></svg>
<div class="a" style="left:803px;top:120px;width:17px;height:1px;background:#7fb5b2;"></div>
<div class="a" style="left:804px;top:143px;width:15px;height:62px;background:#5d686f;"></div>
<div class="a" style="left:836px;top:98px;width:448px;height:25.3px;background:#29333a;"></div>
<div class="hdr" style="left:843.5px;top:103.8px">Chat - primes with codegemma</div>
<svg style="left:1255px;top:106px" width="24" height="10" viewBox="0 0 24 10"><g stroke="#fff" fill="none"><path d="M1.5 .75h5M2.5 .75v3.5M5.5 .75v3.5M.5 4.5h7M4 4.5v4" stroke-width="1.2"/><path d="M15 1.2l6 6M21 1.2l-6 6" stroke-width="2"/></g></svg>
<div class="tb" style="left:840px;top:129px;width:440px;height:34px;background:#37464f"></div>
<div class="a" style="left:841px;top:163px;width:438px;height:500px;background:#37464f;"></div>
<div class="a" style="left:840px;top:163px;width:1px;height:500px;background:#2a363e;"></div>
<div class="a" style="left:1279px;top:163px;width:1px;height:500px;background:#1f2b33;"></div>
<div class="a" style="left:841px;top:163px;width:438px;height:1px;background:#2f3c45;"></div>
<div class="a" style="left:874px;top:164px;width:385px;height:32px;background:#4b5963"></div>
<div class="a" style="left:874px;top:204px;width:385px;height:30px;background:#4b5963"></div>
<div class="a" style="left:874px;top:242px;width:385px;height:413px;background:#4b5963"></div>
<div class="a" style="left:877px;top:276px;width:382px;height:374px;background:#272727"></div>
<div class="a" style="left:0;top:0;width:1259px;height:657px;overflow:hidden">
<div class="chat" style="top:163px">  • The space complexity is O(1), as no additional data</div>
<div class="chat" style="top:180px">structures are used.</div>
<div class="chat" style="top:205px">Can you optimize this code?</div>
<div class="chat" style="top:243px;font-weight:bold">Optimized Code:</div>
<div class="chat" style="top:277px"><span class="cg">```python</span></div>
<div class="chat" style="top:294px"><span class="ck">def</span> <span class="cf">is_prime</span><span class="co">(</span>num<span class="co">):</span></div>
<div class="chat" style="top:311px">    <span class="ck">if</span> num <span class="co">&lt;=</span> <span class="cn">1</span><span class="co">:</span></div>
<div class="chat" style="top:328px">        <span class="ck">return</span> <span class="ck">False</span></div>
<div class="chat" style="top:345px">    <span class="ck">if</span> num <span class="co">&lt;=</span> <span class="cn">3</span><span class="co">:</span></div>
<div class="chat" style="top:362px">        <span class="ck">return</span> <span class="ck">True</span></div>
<div class="chat" style="top:379px">    <span class="ck">if</span> num <span class="co">%</span> <span class="cn">2</span> <span class="co">==</span> <span class="cn">0</span> <span class="ck">or</span> num <span class="co">%</span> <span class="cn">3</span> <span class="co">==</span> <span class="cn">0</span><span class="co">:</span></div>
<div class="chat" style="top:396px">        <span class="ck">return</span> <span class="ck">False</span></div>
<div class="chat" style="top:413px">    i <span class="co">=</span> <span class="cn">5</span></div>
<div class="chat" style="top:430px">    <span class="ck">while</span> i <span class="co">*</span> i <span class="co">&lt;=</span> num<span class="co">:</span></div>
<div class="chat" style="top:447px">        <span class="ck">if</span> num <span class="co">%</span> i <span class="co">==</span> <span class="cn">0</span> <span class="ck">or</span> num <span class="co">%</span> <span class="co">(</span>i <span class="co">+</span> <span class="cn">2</span><span class="co">)</span> <span class="co">==</span> <span class="cn">0</span><span class="co">:</span></div>
<div class="chat" style="top:464px">            <span class="ck">return</span> <span class="ck">False</span></div>
<div class="chat" style="top:481px">        i <span class="co">+=</span> <span class="cn">6</span></div>
<div class="chat" style="top:498px">    <span class="ck">return</span> <span class="ck">True</span></div>
<div class="chat" style="top:532px"><span class="ck">def</span> <span class="cf">count_primes</span><span class="co">(</span>limit<span class="co">):</span></div>
<div class="chat" style="top:549px">    count <span class="co">=</span> <span class="cn">0</span></div>
<div class="chat" style="top:566px">    <span class="ck">for</span> num <span class="ck">in</span> <span class="cb">range</span><span class="co">(</span><span class="cn">2</span><span class="co">,</span> limit <span class="co">+</span> <span class="cn">1</span><span class="co">):</span></div>
<div class="chat" style="top:583px">        <span class="ck">if</span> is_prime<span class="co">(</span>num<span class="co">):</span></div>
<div class="chat" style="top:600px">            count <span class="co">+=</span> <span class="cn">1</span></div>
<div class="chat" style="top:617px">    <span class="ck">return</span> count</div>
<div class="chat" style="top:634px"><span class="cg">```</span></div>
</div>
<svg style="left:1265px;top:169px" width="11" height="8" viewBox="0 0 11 8"><path d="M1 6.5L5.5 2 10 6.5" stroke="#f4f4f4" stroke-width="1.4" fill="none"/></svg>
<svg style="left:1265px;top:642px" width="11" height="8" viewBox="0 0 11 8"><path d="M1 1.5L5.5 6 10 1.5" stroke="#f4f4f4" stroke-width="1.4" fill="none"/></svg>
<div class="a" style="left:1263px;top:390px;width:15px;height:114px;background:#626d74"></div>
<svg style="left:847px;top:136px" width="22" height="21" viewBox="0 0 22 21"><path d="M18.900 10.600A9.300 7.200 0 1 0 4.600 14.300A9.300 7.200 0 0 0 10.800 15.600" fill="none" stroke="#ececec" stroke-width="1.750" stroke-linecap="round"/><path d="M3.400 14L.4 18.500L7 16.200Z" fill="#ececec" stroke="#ececec" stroke-width=".6" stroke-linejoin="round"/><path d="M13 16.200h8.400M17.200 12v8.400" stroke="#ececec" stroke-width="1.700"/></svg>
<svg style="left:878px;top:136px" width="22" height="21" viewBox="0 0 22 21"><path d="M18.900 10.600A9.300 7.200 0 1 0 4.600 14.300A9.300 7.200 0 0 0 10.800 15.600" fill="none" stroke="#ececec" stroke-width="1.750" stroke-linecap="round"/><path d="M3.400 14L.4 18.500L7 16.200Z" fill="#ececec" stroke="#ececec" stroke-width=".6" stroke-linejoin="round"/><path d="M14.400 13.700l5.700 5.700M20.100 13.700l-5.700 5.700" stroke="#ececec" stroke-width="1.800"/></svg>
<svg style="left:914px;top:136px" width="22" height="20" viewBox="0 0 22 20"><ellipse cx="11" cy="8.900" rx="9.100" ry="7.300" fill="none" stroke="#ececec" stroke-width="1.800"/><path d="M3.800 13.400L1.300 18.800L8 15.900Z" fill="#ececec" stroke="#ececec" stroke-width=".5" stroke-linejoin="round"/><path d="M15 8.800H9.500" stroke="#ececec" stroke-width="2"/><path d="M11 5.600L7.200 8.800L11 12z" fill="#ececec"/></svg>
<svg style="left:945px;top:136px" width="22" height="20" viewBox="0 0 22 20"><ellipse cx="11" cy="8.900" rx="9.100" ry="7.300" fill="none" stroke="#ececec" stroke-width="1.800"/><path d="M3.800 13.400L1.300 18.800L8 15.900Z" fill="#ececec" stroke="#ececec" stroke-width=".5" stroke-linejoin="round"/><path d="M7 8.800H12.500" stroke="#ececec" stroke-width="2"/><path d="M11 5.600L14.800 8.800L11 12z" fill="#ececec"/></svg>
<svg style="left:982px;top:136px" width="22" height="21" viewBox="0 0 22 21"><path d="M1.200 3a2 2 0 0 1 2-2h12.300l4 4v13a2 2 0 0 1-2 2H3.200a2 2 0 0 1-2-2z" fill="none" stroke="#ececec" stroke-width="1.700"/><rect x="5" y="4" width="10" height="4" fill="#ececec"/><circle cx="10.300" cy="13.500" r="3" fill="#ececec"/></svg>
<svg style="left:1022px;top:138px" width="16" height="15" viewBox="0 0 16 15"><path d="M.5 .5h14.500v3.200H9.600v10.800H6V3.700H.5z" fill="#ececec"/></svg>
<svg style="left:1244px;top:135px" width="32" height="23" viewBox="0 0 32 23"><path d="M8.88 5.37 L8.88 6.23 L7.62 6.75 L7.37 7.33 L7.90 8.59 L7.29 9.20 L6.03 8.67 L5.45 8.92 L4.93 10.18 L4.07 10.18 L3.55 8.92 L2.97 8.67 L1.71 9.20 L1.10 8.59 L1.63 7.33 L1.38 6.75 L0.12 6.23 L0.12 5.37 L1.38 4.85 L1.63 4.27 L1.10 3.01 L1.71 2.40 L2.97 2.93 L3.55 2.68 L4.07 1.42 L4.93 1.42 L5.45 2.68 L6.03 2.93 L7.29 2.40 L7.90 3.01 L7.37 4.27 L7.62 4.85Z M6.08 5.8A1.58 1.58 0 1 0 2.92 5.8A1.58 1.58 0 1 0 6.08 5.8Z" fill="#ececec" fill-rule="evenodd"/><path d="M21.36 13.87 L21.36 15.33 L19.24 16.19 L18.83 17.18 L19.72 19.29 L18.69 20.32 L16.58 19.43 L15.59 19.84 L14.73 21.96 L13.27 21.96 L12.41 19.84 L11.42 19.43 L9.31 20.32 L8.28 19.29 L9.17 17.18 L8.76 16.19 L6.64 15.33 L6.64 13.87 L8.76 13.01 L9.17 12.02 L8.28 9.91 L9.31 8.88 L11.42 9.77 L12.41 9.36 L13.27 7.24 L14.73 7.24 L15.59 9.36 L16.58 9.77 L18.69 8.88 L19.72 9.91 L18.83 12.02 L19.24 13.01Z M16.81 14.6A2.81 2.81 0 1 0 11.19 14.6A2.81 2.81 0 1 0 16.81 14.6Z" fill="#ececec" fill-rule="evenodd"/><path d="M22 10.500h9.500L26.750 15.500z" fill="#ececec"/></svg><div class="sep" style="left:906px;top:135px;height:22px"></div><div class="sep" style="left:974px;top:135px;height:22px"></div><div class="sep" style="left:1011px;top:135px;height:22px"></div><svg style="left:845px;top:207px" width="24" height="18" viewBox="0 0 24 18"><g fill="none" stroke="#ececec" stroke-width="1.900"><circle cx="8.200" cy="5" r="3.200"/><path d="M1.200 16.800l1.300-4.300c.6-1.500 2.500-2 5.700-2s5.100.5 5.700 2l1.300 4.300z" stroke-linejoin="round"/></g><text x="16" y="11.500" font-family="Liberation Sans,sans-serif" font-size="11.500" fill="#ececec">?</text></svg><svg style="left:847px;top:244px" width="18" height="20" viewBox="0 0 18 20"><rect x="1.400" y="2" width="15.200" height="8.800" rx="3.800" fill="none" stroke="#ececec" stroke-width="2"/><circle cx="6" cy="6.300" r="1.800" fill="#e53935"/><circle cx="12" cy="6.300" r="1.800" fill="#e53935"/><rect x="1.400" y="13.600" width="15.200" height="4.600" rx=".5" fill="none" stroke="#ececec" stroke-width="2"/></svg>
</body></html>
